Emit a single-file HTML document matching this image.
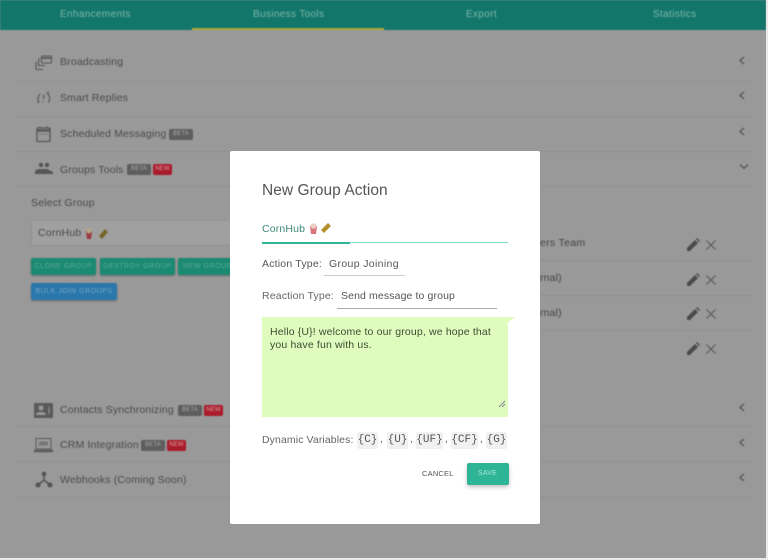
<!DOCTYPE html>
<html><head><meta charset="utf-8">
<style>
*{box-sizing:border-box}
html,body{margin:0;padding:0;background:#e8e8e8}
body{width:768px;height:560px;overflow:hidden;position:relative;font-family:"Liberation Sans",sans-serif}
#bg{position:absolute;left:0;top:0;width:766px;height:558px;background:#999;overflow:hidden}
#soft{position:absolute;left:0;top:0;width:766px;height:558px;filter:blur(.55px)}
.a{position:absolute;white-space:nowrap}
.head{left:0;top:0;width:766px;height:30px;background:#12776a}
.tab{top:8px;font-size:10px;color:#7fb5ab;letter-spacing:.35px;line-height:13px}
.row{font-size:10.5px;color:#4a4a4a;letter-spacing:.16px;line-height:13px}
.ln{height:1px;background:#909090;left:16px;width:737px}
.b{display:inline-block;position:absolute;font-size:6px;line-height:10px;height:11px;text-align:center;border-radius:2px;color:#aaa;letter-spacing:.2px}
.be{background:#5e5e5e;width:24px}
.ne{background:#aa1b2b;width:19px;color:#d9a0a5}
.btn{position:absolute;height:17px;border-radius:2px;font-size:7px;line-height:17px;text-align:center;color:#5fa898;letter-spacing:.55px;background:#1a8a72;box-shadow:0 1px 2px rgba(0,0,0,.3)}
svg{position:absolute;overflow:visible}
#dlg{position:absolute;left:230px;top:151px;width:310px;height:373px;background:#fff;border-radius:2px;filter:blur(.35px)}
#dlg .a{color:#555}
.code{position:absolute;top:281px;height:17px;background:#f1f1f1;border-radius:2px;font:11px/17px "Liberation Mono",monospace;color:#555;text-align:center}
</style></head><body>
<div id="bg"><div id="soft">
<div class="a head"></div>
<div class="a" style="left:192px;top:28px;width:192px;height:2px;background:#a8a83a"></div>
<div class="a tab" style="left:60px">Enhancements</div>
<div class="a tab" style="left:253px">Business Tools</div>
<div class="a tab" style="left:466px">Export</div>
<div class="a tab" style="left:653px">Statistics</div>

<div class="a row" style="left:60px;top:56px">Broadcasting</div>
<div class="a row" style="left:60px;top:92px">Smart Replies</div>
<div class="a row" style="left:60px;top:128px">Scheduled Messaging</div>
<span class="b be" style="left:169px;top:129px">BETA</span>
<div class="a row" style="left:60px;top:164px">Groups Tools</div>
<span class="b be" style="left:127px;top:164px">BETA</span>
<span class="b ne" style="left:153px;top:164px">NEW</span>

<div class="a ln" style="top:81px"></div>
<div class="a ln" style="top:116px"></div>
<div class="a ln" style="top:151px"></div>
<div class="a ln" style="top:186px"></div>

<svg style="left:35px;top:55px" width="18" height="16" fill="none" stroke="#555" stroke-width="1.1"><rect x="6.500" y="1" width="10" height="7" rx="1"/><path d="M6.500 3H16.500" stroke-width="1.600"/><path d="M5 4H4.500Q3.500 4 3.500 5V10.500H10M1 7V13.500Q1 14.500 2 14.500H8"/></svg>
<svg style="left:36px;top:91px" width="16" height="16" fill="none" stroke="#5a5a5a" stroke-width="1.200"><path d="M4 3Q0.500 7 3 12M3 12L1.500 10.500M11 2Q15.500 6 12.500 11.500M11 2L13 1.500M8 3.500L7.500 8M7.500 10V11"/></svg>
<svg style="left:36px;top:126px" width="15" height="17" fill="none" stroke="#555" stroke-width="1.300"><rect x="1" y="2" width="13" height="13.500" rx="1"/><path d="M1 4.500H14" stroke-width="2.400"/><path d="M3.500 8H12" stroke-dasharray="1.200 1.200" stroke="#6a6a6a" stroke-width="1.200"/><path d="M4 0.500V2M11 0.500V2"/></svg>
<svg style="left:35px;top:162px" width="18" height="13" fill="#555"><circle cx="6" cy="3" r="2.200"/><circle cx="12" cy="3" r="2.200"/><path d="M0 12V10Q0 7 6 7T12 7T18 10V12Z"/></svg>

<svg style="left:738px;top:56px" width="8" height="9" fill="none" stroke="#555" stroke-width="1.300"><path d="M6 1L2 4.500L6 8"/></svg>
<svg style="left:738px;top:91px" width="8" height="9" fill="none" stroke="#555" stroke-width="1.300"><path d="M6 1L2 4.500L6 8"/></svg>
<svg style="left:738px;top:127px" width="8" height="9" fill="none" stroke="#555" stroke-width="1.300"><path d="M6 1L2 4.500L6 8"/></svg>
<svg style="left:739px;top:163px" width="10" height="8" fill="none" stroke="#555" stroke-width="1.300"><path d="M1 1.500L5 5.500L9 1.500"/></svg>

<div class="a row" style="left:31px;top:197px;letter-spacing:.2px">Select Group</div>
<div class="a" style="left:31px;top:220px;width:220px;height:26px;background:#a0a0a0;border:1px solid #929292;border-radius:2px"></div>
<div class="a row" style="left:38px;top:227px;letter-spacing:.2px">CornHub</div>
<svg style="left:84px;top:228px" width="26" height="12"><path d="M2 3H8L7 11H3Z" fill="#9b3a40"/><circle cx="5" cy="3" r="2.500" fill="#b5a98a"/><path d="M15 8L21 1L24 4L18 11Z" fill="#77662b"/></svg>

<div class="btn" style="left:31px;top:258px;width:65px">CLONE GROUP</div>
<div class="btn" style="left:100px;top:258px;width:75px">DESTROY GROUP</div>
<div class="btn" style="left:178px;top:258px;width:60px;text-align:left;padding-left:5px;overflow:hidden">NEW GROUP</div>
<div class="btn" style="left:31px;top:283px;width:86px;background:#2a77ab;color:#77a5c5">BULK JOIN GROUPS</div>

<div class="a row" style="left:540px;top:237px;color:#444;letter-spacing:.3px">ers Team</div>
<div class="a row" style="left:540px;top:272px;color:#444">rnal)</div>
<div class="a row" style="left:540px;top:307px;color:#444">rnal)</div>
<div class="a" style="left:540px;top:260px;width:212px;height:1px;background:#909090"></div>
<div class="a" style="left:540px;top:295px;width:212px;height:1px;background:#909090"></div>
<div class="a" style="left:540px;top:330px;width:212px;height:1px;background:#909090"></div>

<svg style="left:686px;top:238px" width="30" height="14"><path d="M1 13V10L9 2L12 5L4 13Z M10 1L11 0L14 3L13 4Z" fill="#4a4a4a"/><path d="M20.500 2.500L29.500 11.500M29.500 2.500L20.500 11.500" stroke="#555" stroke-width="1"/></svg>
<svg style="left:686px;top:273px" width="30" height="14"><path d="M1 13V10L9 2L12 5L4 13Z M10 1L11 0L14 3L13 4Z" fill="#4a4a4a"/><path d="M20.500 2.500L29.500 11.500M29.500 2.500L20.500 11.500" stroke="#555" stroke-width="1"/></svg>
<svg style="left:686px;top:307px" width="30" height="14"><path d="M1 13V10L9 2L12 5L4 13Z M10 1L11 0L14 3L13 4Z" fill="#4a4a4a"/><path d="M20.500 2.500L29.500 11.500M29.500 2.500L20.500 11.500" stroke="#555" stroke-width="1"/></svg>
<svg style="left:686px;top:342px" width="30" height="14"><path d="M1 13V10L9 2L12 5L4 13Z M10 1L11 0L14 3L13 4Z" fill="#4a4a4a"/><path d="M20.500 2.500L29.500 11.500M29.500 2.500L20.500 11.500" stroke="#555" stroke-width="1"/></svg>

<div class="a row" style="left:60px;top:404px">Contacts Synchronizing</div>
<span class="b be" style="left:178px;top:405px">BETA</span>
<span class="b ne" style="left:204px;top:405px">NEW</span>
<div class="a row" style="left:60px;top:439px">CRM Integration</div>
<span class="b be" style="left:141px;top:440px">BETA</span>
<span class="b ne" style="left:167px;top:440px">NEW</span>
<div class="a row" style="left:60px;top:474px">Webhooks (Coming Soon)</div>

<div class="a ln" style="top:426px"></div>
<div class="a ln" style="top:461px"></div>
<div class="a ln" style="top:497px"></div>

<svg style="left:34px;top:403px" width="19" height="15"><rect width="19" height="15" rx="1" fill="#5a5a5a"/><circle cx="7" cy="5" r="2.500" fill="#999"/><path d="M2 12Q2 9 7 9T12 12Z" fill="#999"/><path d="M15 4V11" stroke="#999"/></svg>
<svg style="left:34px;top:438px" width="19" height="15" fill="none" stroke="#5a5a5a"><rect x="2" y=".500" width="15" height="10.500"/><rect x="5" y="3.500" width="9" height="4" fill="#777" stroke="none"/><path d="M0 13H19" stroke-width="2.500"/></svg>
<svg style="left:36px;top:472px" width="16" height="16" fill="none" stroke="#555" stroke-width="1.500"><path d="M8 3V8L2 13M8 8L14 13"/><circle cx="8" cy="2" r="1.600" fill="#555"/><circle cx="2" cy="13" r="1.800" fill="#555"/><circle cx="14" cy="13" r="1.800" fill="#555"/></svg>

<svg style="left:738px;top:403px" width="8" height="9" fill="none" stroke="#555" stroke-width="1.300"><path d="M6 1L2 4.500L6 8"/></svg>
<svg style="left:738px;top:438px" width="8" height="9" fill="none" stroke="#555" stroke-width="1.300"><path d="M6 1L2 4.500L6 8"/></svg>
<svg style="left:738px;top:473px" width="8" height="9" fill="none" stroke="#555" stroke-width="1.300"><path d="M6 1L2 4.500L6 8"/></svg>
</div></div>

<div id="dlg">
<div class="a" style="left:32px;top:31px;font-size:15.500px;line-height:18px;letter-spacing:.05px">New Group Action</div>
<div class="a" style="left:32px;top:72px;font-size:10.500px;line-height:13px;color:#3f8a78;letter-spacing:.15px">CornHub</div>
<svg style="left:79px;top:72px" width="26" height="12"><path d="M1 3H8L7 11H2Z" fill="#d9767c"/><circle cx="4.500" cy="3" r="2.800" fill="#eccfc4"/><path d="M12 7L19 0L22 3L15 10Z" fill="#b2902e"/></svg>
<div class="a" style="left:32px;top:91px;width:246px;height:1px;background:#7fdcc4"></div>
<div class="a" style="left:32px;top:90.500px;width:88px;height:2px;background:#2fb597"></div>

<div class="a" style="left:32px;top:107px;font-size:10.500px;line-height:13px;letter-spacing:.2px">Action Type:</div>
<div class="a" style="left:99px;top:107px;font-size:10.500px;line-height:13px;letter-spacing:.35px">Group Joining</div>
<div class="a" style="left:94px;top:124px;width:81px;height:1px;background:#ccc"></div>

<div class="a" style="left:32px;top:139px;font-size:10.500px;line-height:13px;letter-spacing:.15px;color:#666">Reaction Type:</div>
<div class="a" style="left:111px;top:139px;font-size:10.500px;line-height:13px;letter-spacing:.12px">Send message to group</div>
<div class="a" style="left:107px;top:157px;width:160px;height:1px;background:#aaa"></div>

<div class="a" style="left:32px;top:166px;width:246px;height:100px;background:#dffcbe"></div>
<div class="a" style="left:276px;top:166px;width:9px;height:0;border-top:5px solid #dffcbe;border-right:7px solid transparent"></div>
<div class="a" style="left:40px;top:175px;font-size:10.500px;line-height:13px;letter-spacing:.15px;color:#3a4d33">Hello {U}! welcome to our group, we hope that<br>you have fun with us.</div>
<svg style="left:268px;top:249px" width="8" height="8" stroke="#889" fill="none"><path d="M1 7L7 1M4 7L7 4"/></svg>

<div class="a" style="left:32px;top:283px;font-size:10.500px;line-height:13px;letter-spacing:.1px;color:#666">Dynamic Variables:</div>
<div class="code" style="left:127px;width:21px">{C}</div>
<div class="a" style="left:150px;top:283px;font-size:10px">,</div>
<div class="code" style="left:157px;width:21px">{U}</div>
<div class="a" style="left:180px;top:283px;font-size:10px">,</div>
<div class="code" style="left:186px;width:27px">{UF}</div>
<div class="a" style="left:215px;top:283px;font-size:10px">,</div>
<div class="code" style="left:221px;width:27px">{CF}</div>
<div class="a" style="left:250px;top:283px;font-size:10px">,</div>
<div class="code" style="left:256px;width:21px">{G}</div>

<div class="a" style="left:192px;top:318px;font-size:7.500px;line-height:10px;letter-spacing:.2px">CANCEL</div>
<div class="a" style="left:236.500px;top:312px;width:42px;height:22px;background:#2db596;border-radius:2px;box-shadow:0 2px 4px rgba(0,0,0,.25);font-size:7px;line-height:22px;text-align:center;color:#a7e6d6;letter-spacing:.2px">SAVE</div>
</div>
</div>
</body></html>
